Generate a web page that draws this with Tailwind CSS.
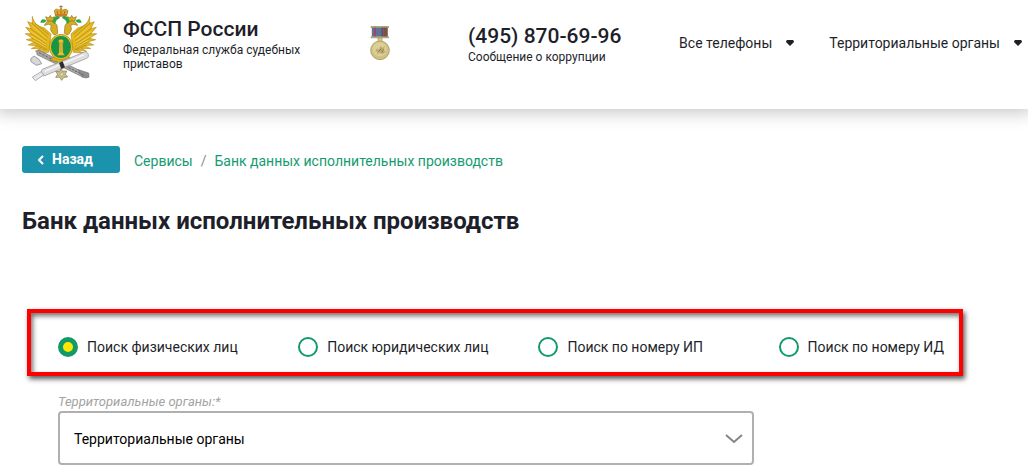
<!DOCTYPE html>
<html lang="ru">
<head>
    <meta charset="UTF-8">
    <meta name="viewport" content="width=device-width, initial-scale=1.0">
    <title>Банк данных исполнительных производств</title>
    <script src="https://cdn.jsdelivr.net/npm/@tailwindcss/browser@4"></script>
</head>
<body class="bg-white text-[#1e1f2b] font-['Roboto',sans-serif] overflow-x-hidden">

    <!-- Header -->
    <header class="flex items-start h-[109px] pl-[15px] pr-[6px] shadow-[0_0_16px_4px_rgba(0,0,0,0.22)]">
        <a href="#" class="flex shrink-0 w-[355px]">
            <svg class="w-[90px] h-[90px] shrink-0" viewBox="0 0 270 270" role="img" aria-label="Герб ФССП">
                <!-- wings -->
                <g fill="#e5b81c" stroke="#b88f1c" stroke-width="2" stroke-linejoin="round">
                    <path d="M52 49 C56 72 72 80 88 84 L108 102 L101 157 L72 159 L91 149 L61 154 L77 145 L49 146 L67 137 L40 135 L58 126 L34 119 L53 115 L31 101 L49 101 L32 82 L49 86 L38 65 L52 70 Z"/>
                    <path d="M224 49 C220 72 204 80 188 84 L168 102 L175 157 L204 159 L185 149 L215 154 L199 145 L227 146 L209 137 L236 135 L218 126 L242 119 L223 115 L245 101 L227 101 L244 82 L227 86 L238 65 L224 70 Z"/>
                </g>
                <g fill="none" stroke="#a98520" stroke-width="2">
                    <path d="M51 70 L98 112 M47 86 L96 122 M47 101 L94 131 M51 115 L95 139 M58 127 L96 145 M68 138 L98 150 M60 70 L101 103"/>
                    <path d="M225 70 L178 112 M229 86 L180 122 M229 101 L182 131 M225 115 L181 139 M218 127 L180 145 M208 138 L178 150 M216 70 L175 103"/>
                </g>
                <g fill="none" stroke="#f6dc64" stroke-width="2">
                    <path d="M52 78 L94 115 M47 94 L93 127 M49 108 L92 135 M56 121 L94 143"/>
                    <path d="M224 78 L182 115 M229 94 L183 127 M227 108 L184 135 M220 121 L182 143"/>
                </g>
                <!-- heads -->
                <g fill="#d9ad20" stroke="#92731c" stroke-width="2" stroke-linejoin="round">
                    <path d="M118 105 C106 94 104 84 110 77 L101 73 L88 76 L95 66 L105 62 L116 64 L126 76 L128 100 Z"/>
                    <path d="M158 105 C170 94 172 84 166 77 L175 73 L188 76 L181 66 L171 62 L160 64 L150 76 L148 100 Z"/>
                    <path d="M96 62 L92 50 L101 54 L106 46 L110 54 L118 50 L116 63 Z"/>
                    <path d="M180 62 L184 50 L175 54 L170 46 L166 54 L158 50 L160 63 Z"/>
                </g>
                <!-- ribbons -->
                <path d="M117 52 L130 47 L135 54 L125 60 L119 72 L112 66 Z M159 52 L146 47 L141 54 L151 60 L157 72 L164 66 Z" fill="#2ca64b"/>
                <path d="M78 62 C83 55 91 58 95 63 L87 68 L76 68 Z M198 62 C193 55 185 58 181 63 L189 68 L200 68 Z" fill="#2ca64b"/>
                <!-- large crown -->
                <path d="M122 49 L118 32 C122 25 130 27 133 32 C134 24 142 24 143 32 C148 26 156 27 159 33 L154 49 Z" fill="#e3a92a" stroke="#9b6a1c" stroke-width="2"/>
                <path d="M138 16 V28 M133 20 H143 M126 33 L129 44 M138 32 V44 M150 33 L147 44" stroke="#a56f1d" stroke-width="3"/>
                <path d="M121 45 H155" stroke="#bc5f28" stroke-width="3"/>
                <!-- axe and fasces -->
                <g stroke="#777" stroke-width="2" stroke-linejoin="round">
                    <path d="M65 154 L73 151 L221 225 L216 234 L205 232 L66 164 Z" fill="#a6a6a8"/>
                    <path d="M57 168 L72 178 L80 191 L64 196 L48 185 L47 176 Z" fill="#d8d8db"/>
                    <path d="M190 209 L221 219 L222 232 L201 231 Z" fill="#8e8e94"/>
                </g>
                <path d="M72 158 L207 226" stroke="#65656b" stroke-width="3" stroke-dasharray="7 4"/>
                <!-- tail -->
                <path d="M116 171 L104 181 L126 185 L138 205 L151 185 L174 181 L160 168 Z" fill="#dbae20" stroke="#92731c" stroke-width="2"/>
                <!-- scroll -->
                <path d="M82 208 L211 155 C219 155 224 169 217 174 L87 228 C79 227 76 214 82 208 Z" fill="#dedee1" stroke="#8b8b90" stroke-width="2"/>
                <path d="M89 214 L207 164" stroke="#f7f7f8" stroke-width="4"/>
                <path d="M52 231 L79 215 L86 225 L61 242 Z" fill="#e7e7e9" stroke="#8b8b90" stroke-width="2"/>
                <path d="M132 189 L143 184 L150 202 L139 207 Z" fill="#2e2e31"/>
                <path d="M138 205 L143 214 L155 213 L151 223 L158 231 L147 232 L140 241 L134 232 L122 232 L128 223 L122 214 L134 214 Z" fill="#c9bd87" stroke="#7d7654" stroke-width="2"/>
                <circle cx="140" cy="223" r="5" fill="#e9e2b5" stroke="#7d7654"/>
                <!-- shield -->
                <ellipse cx="138" cy="141" rx="35" ry="38" fill="#efbe24" stroke="#a98219" stroke-width="2"/>
                <ellipse cx="138" cy="141" rx="30" ry="33" fill="#199447"/>
                <path d="M131 124 C128 117 148 117 145 124 L143 132 L144 158 L149 166 H127 L132 158 L133 132 Z" fill="#ecc334" stroke="#a98219"/>
                <path d="M129 129 H147 M138 133 V158" stroke="#b0861b" stroke-width="2"/>
            </svg>
            <span class="block pt-4 pl-[18px]">
                <span class="block text-[21px] leading-[27px] font-medium">ФССП России</span>
                <span class="block w-[180px] text-[12px] leading-[14px]">Федеральная служба судебных приставов</span>
            </span>
        </a>
        <a href="#" class="shrink-0 pt-[26px] w-[98px]" aria-label="Медаль">
            <svg class="w-[20px] h-[35px]" viewBox="0 0 60 105">
                <path d="M2 0 H57 V6 H54 V31 H57 V37 H2 V31 H5 V6 H2 Z" fill="#b4a77c"/>
                <path d="M6 5 H53 V31 H6 Z" fill="#5c719e"/>
                <path d="M12 5 H18 V31 H12 Z" fill="#9c4862"/>
                <path d="M34 5 H40 V31 H34 Z" fill="#6f4d5b"/>
                <path d="M41 5 H51 V31 H41 Z" fill="#80503e"/>
                <path d="M24 36 H36 V47 H24 Z" fill="#d9cc91" stroke="#a59765" stroke-width="2"/>
                <circle cx="30" cy="73" r="28" fill="#cfc083" stroke="#b3a569" stroke-width="3"/>
                <circle cx="29" cy="70" r="21" fill="#ddcf98"/>
                <path d="M15 76 L22 67 L27 72 L31 59 L37 66 L44 60 L41 74 L48 76 L38 85 L29 80 L20 86 L23 78 Z" fill="#bcab70"/>
                <path d="M26 76 L34 68 M35 79 L42 70" stroke="#887947" stroke-width="3"/>
            </svg>
        </a>
        <div class="shrink-0 pt-[22px]">
            <a href="tel:+74958706996" class="block text-[21px] leading-[28px] font-medium">(495) 870-69-96</a>
            <a href="#" class="block text-[12px] leading-[14px]">Сообщение о коррупции</a>
        </div>
        <nav class="flex shrink-0 ml-auto pt-8 gap-[35px] text-[14px] leading-[22px]">
            <button type="button" class="flex items-center gap-[14px]">Все телефоны
                <svg class="w-2 h-[6px]" viewBox="0 0 8 6" fill="#1e1f2b"><path d="M1 0 H7 Q8 1 8 2 L4 6 L0 2 Q0 1 1 0 Z"/></svg>
            </button>
            <button type="button" class="flex items-center gap-[14px]">Территориальные органы
                <svg class="w-2 h-[6px]" viewBox="0 0 8 6" fill="#1e1f2b"><path d="M1 0 H7 Q8 1 8 2 L4 6 L0 2 Q0 1 1 0 Z"/></svg>
            </button>
        </nav>
    </header>

    <main class="pl-[22px] pr-[22px] pt-[37px]">
        <!-- Back button and breadcrumbs -->
        <div class="flex items-center gap-[14px]">
            <button type="button" class="flex items-center gap-2 w-[98px] h-[27px] pl-4 rounded-[3px] bg-[#1b93ad] text-white text-[14px] font-bold">
                <svg class="w-[6px] h-[10px]" viewBox="0 0 6 10" fill="none" stroke="#fff" stroke-width="2"><path d="M5 1 L1 5 L5 9"/></svg>
                Назад
            </button>
            <nav class="flex gap-2 pt-[3px] text-[14px] leading-[20px] text-[#159b6f]">
                <a href="#">Сервисы</a>
                <span class="text-[#8c8c8c]">/</span>
                <a href="#">Банк данных исполнительных производств</a>
            </nav>
        </div>

        <h1 class="mt-[31px] text-[24px] leading-[34px] font-bold">Банк данных исполнительных производств</h1>

        <form>
            <!-- Search type -->
            <fieldset class="grid grid-cols-[1fr_1fr_1fr_auto] items-center h-[67px] mt-[71px] ml-[5px] mr-[43px] pl-[27px] pr-[15px] pt-2 border-4 border-[#fe0000] text-[14px] leading-[20px] shadow-[2px_3px_5px_rgba(0,0,0,0.65),inset_2px_3px_5px_rgba(0,0,0,0.55)]">
                <label class="flex items-center gap-[9px]">
                    <input type="radio" name="kind" checked class="appearance-none shrink-0 size-5 rounded-full border-2 border-[#139a6b] checked:border-[5px] checked:bg-[#ffe800]">
                    Поиск физических лиц
                </label>
                <label class="flex items-center gap-[9px]">
                    <input type="radio" name="kind" class="appearance-none shrink-0 size-5 rounded-full border-2 border-[#139a6b] checked:border-[5px] checked:bg-[#ffe800]">
                    Поиск юридических лиц
                </label>
                <label class="flex items-center gap-[9px]">
                    <input type="radio" name="kind" class="appearance-none shrink-0 size-5 rounded-full border-2 border-[#139a6b] checked:border-[5px] checked:bg-[#ffe800]">
                    Поиск по номеру ИП
                </label>
                <label class="flex items-center gap-[9px]">
                    <input type="radio" name="kind" class="appearance-none shrink-0 size-5 rounded-full border-2 border-[#139a6b] checked:border-[5px] checked:bg-[#ffe800]">
                    Поиск по номеру ИД
                </label>
            </fieldset>

            <!-- Territorial office -->
            <div class="ml-9 mt-[17px] max-w-[696px]">
                <label for="region" class="block text-[13px] leading-[18px] italic text-[#a3a3a3]">Территориальные органы:*</label>
                <div class="relative">
                    <select id="region" class="appearance-none block w-full h-[54px] px-[14px] pt-[2px] rounded-[4px] border-2 border-[#b0b0b0] bg-white text-[14px] text-black">
                        <option>Территориальные органы</option>
                    </select>
                    <svg class="absolute right-[11px] top-[22px] w-[18px] h-[11px] pointer-events-none" viewBox="0 0 18 11" fill="none" stroke="#858585" stroke-width="2"><path d="M1 2 L9 9 L17 2"/></svg>
                </div>
            </div>
        </form>
    </main>

</body>
</html>
